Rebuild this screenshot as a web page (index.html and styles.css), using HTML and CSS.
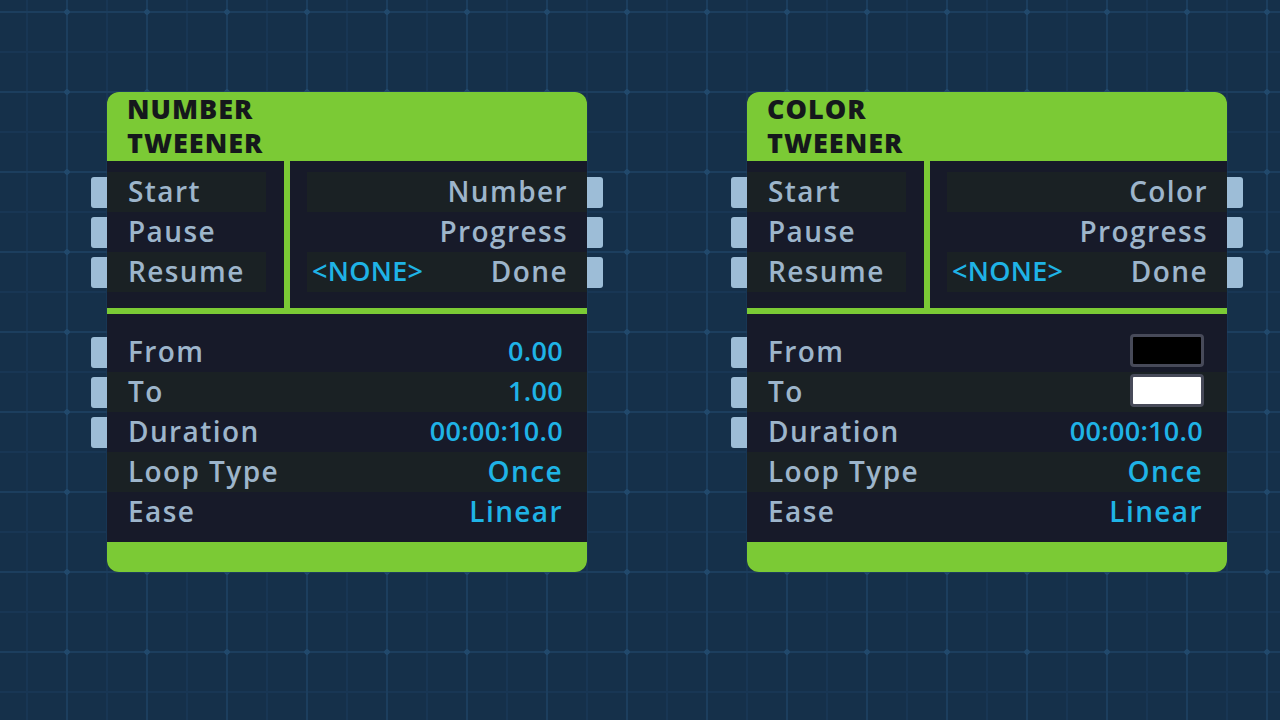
FILE: index.html
```html
<!DOCTYPE html>
<html lang="en">
<head>
<meta charset="utf-8">
<title>Tweeners</title>
<link rel="stylesheet" href="styles.css">
</head>
<body>
<div class="canvas">
  <div class="node">
    <div class="node-head"><h2 class="title">NUMBER<br>TWEENER</h2></div>
    <div class="io">
      <div class="io-in">
        <div class="row alt"><span class="port port-l"></span><span class="lbl">Start</span></div>
        <div class="row"><span class="port port-l"></span><span class="lbl">Pause</span></div>
        <div class="row alt"><span class="port port-l"></span><span class="lbl">Resume</span></div>
      </div>
      <div class="io-out">
        <div class="row alt"><span class="lbl">Number</span><span class="port port-r"></span></div>
        <div class="row"><span class="lbl">Progress</span><span class="port port-r"></span></div>
        <div class="row alt split"><span class="val num">&lt;NONE&gt;</span><span class="lbl">Done</span><span class="port port-r"></span></div>
      </div>
    </div>
    <div class="props">
      <div class="prow"><span class="port port-l"></span><span class="lbl">From</span><span class="val num">0.00</span></div>
      <div class="prow alt"><span class="port port-l"></span><span class="lbl">To</span><span class="val num">1.00</span></div>
      <div class="prow"><span class="port port-l"></span><span class="lbl">Duration</span><span class="val num">00:00:10.0</span></div>
      <div class="prow alt"><span class="lbl">Loop Type</span><span class="val">Once</span></div>
      <div class="prow"><span class="lbl">Ease</span><span class="val">Linear</span></div>
    </div>
    <div class="node-foot"></div>
  </div>

  <div class="node">
    <div class="node-head"><h2 class="title">COLOR<br>TWEENER</h2></div>
    <div class="io">
      <div class="io-in">
        <div class="row alt"><span class="port port-l"></span><span class="lbl">Start</span></div>
        <div class="row"><span class="port port-l"></span><span class="lbl">Pause</span></div>
        <div class="row alt"><span class="port port-l"></span><span class="lbl">Resume</span></div>
      </div>
      <div class="io-out">
        <div class="row alt"><span class="lbl">Color</span><span class="port port-r"></span></div>
        <div class="row"><span class="lbl">Progress</span><span class="port port-r"></span></div>
        <div class="row alt split"><span class="val num">&lt;NONE&gt;</span><span class="lbl">Done</span><span class="port port-r"></span></div>
      </div>
    </div>
    <div class="props">
      <div class="prow"><span class="port port-l"></span><span class="lbl">From</span><span class="swatch swatch-black"></span></div>
      <div class="prow alt"><span class="port port-l"></span><span class="lbl">To</span><span class="swatch swatch-white"></span></div>
      <div class="prow"><span class="port port-l"></span><span class="lbl">Duration</span><span class="val num">00:00:10.0</span></div>
      <div class="prow alt"><span class="lbl">Loop Type</span><span class="val">Once</span></div>
      <div class="prow"><span class="lbl">Ease</span><span class="val">Linear</span></div>
    </div>
    <div class="node-foot"></div>
  </div>
</div>
</body>
</html>
```

FILE: styles.css
```css
html, body {
  margin: 0;
  padding: 0;
}
body {
  width: 1280px;
  height: 720px;
  overflow: hidden;
  background-color: #15304a;
  background-image:
    radial-gradient(circle at 67px 12px, #21496c 0, #21496c 2.5px, transparent 3px),
    linear-gradient(90deg, #1c3e5e 0, #1c3e5e 2px, transparent 2px),
    linear-gradient(180deg, #1c3e5e 0, #1c3e5e 2px, transparent 2px),
    linear-gradient(90deg, #183654 0, #183654 2px, transparent 2px),
    linear-gradient(180deg, #183654 0, #183654 2px, transparent 2px);
  background-size: 80px 80px, 80px 80px, 80px 80px, 40px 40px, 40px 40px;
  background-position: 0 0, 66px 11px, 66px 11px, 26px 11px, 26px 11px;
  font-family: "Open Sans", "Liberation Sans", sans-serif;
}
.canvas {
  display: flex;
  gap: 160px;
  padding: 92px 0 0 107px;
}
.node {
  width: 480px;
  background: #171a29;
  border-radius: 12px;
  display: flex;
  flex-direction: column;
}
.node-head {
  height: 69px;
  background: #7bca35;
  border-radius: 12px 12px 0 0;
  padding: 0 0 0 20px;
  box-sizing: border-box;
}
.title {
  margin: 0;
  padding-top: 0;
  font-size: 27px;
  line-height: 34px;
  font-weight: 800;
  color: #15181c;
  letter-spacing: 1px;
}
.io {
  display: flex;
  border-bottom: 6px solid #7bca35;
}
.io-in {
  width: 159px;
  padding: 11px 18px 16px 0;
  border-right: 6px solid #7bca35;
}
.io-out {
  flex: 1;
  padding: 11px 0 16px 17px;
}
.row, .prow {
  position: relative;
  height: 40px;
  box-sizing: border-box;
  padding-bottom: 3px;
  display: flex;
  align-items: center;
  font-size: 28px;
  font-weight: 600;
  letter-spacing: 1.4px;
}
.row.alt, .prow.alt {
  background: #1a2124;
}
.io-in .row {
  padding-left: 21px;
}
.io-out .row {
  justify-content: flex-end;
  padding-left: 5px;
  padding-right: 19px;
}
.io-out .row.split {
  justify-content: space-between;
}
.props {
  padding: 18px 0 10px;
}
.prow {
  justify-content: space-between;
  padding-left: 21px;
  padding-right: 24px;
}
.lbl {
  color: #9db5cb;
}
.val {
  color: #1fb3e6;
}
.val.num {
  font-size: 27px;
  letter-spacing: 0.3px;
}
.port {
  position: absolute;
  top: 5px;
  width: 16px;
  height: 31px;
  background: #9dbdd7;
}
.port-l {
  left: -16px;
  border-radius: 3px 0 0 3px;
}
.port-r {
  right: -16px;
  border-radius: 0 3px 3px 0;
}
.swatch {
  width: 68px;
  height: 27px;
  border: 3px solid #474a59;
  border-radius: 4px;
  margin-right: -1px;
}
.swatch-black {
  background: #000000;
}
.swatch-white {
  background: #ffffff;
}
.node-foot {
  height: 30px;
  background: #7bca35;
  border-radius: 0 0 12px 12px;
}
```
